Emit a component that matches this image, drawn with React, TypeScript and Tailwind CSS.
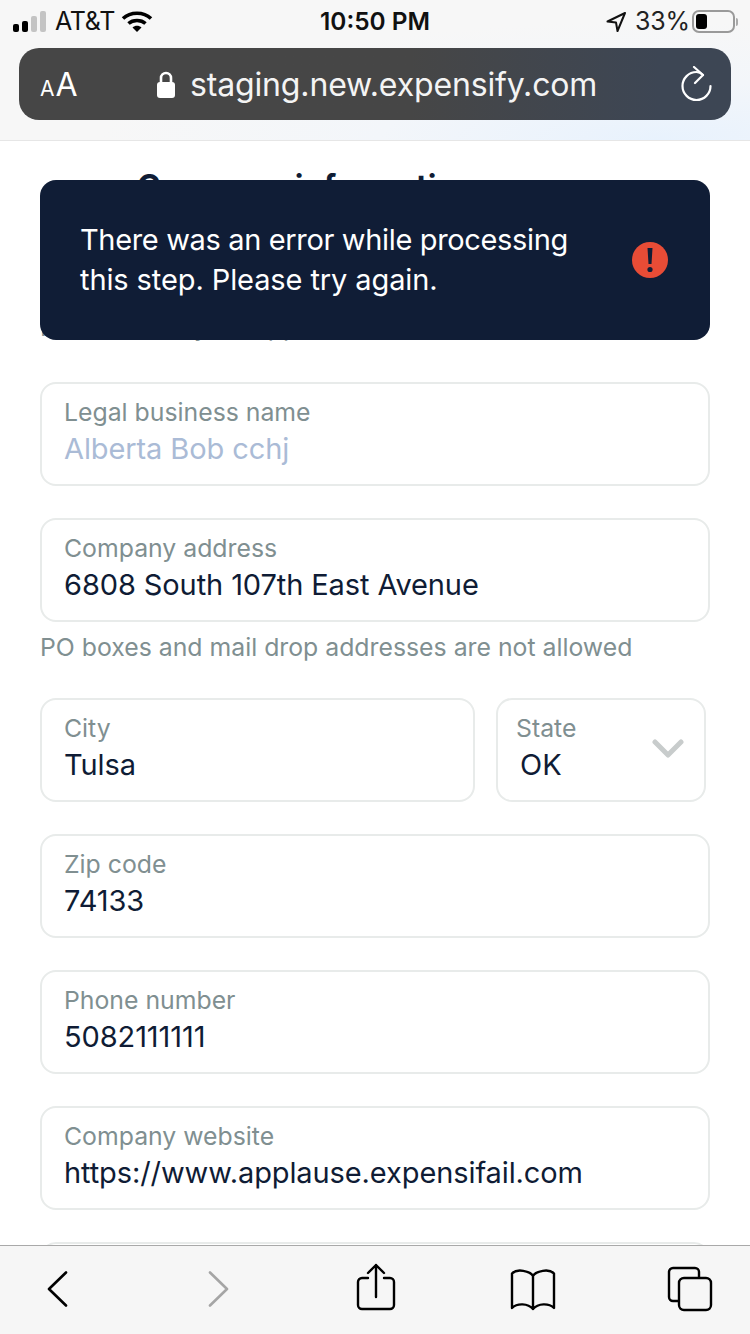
import React from "react";

const font = "font-['Inter',sans-serif]";

function Field({ label, value, muted }: { label: string; value: string; muted?: boolean }) {
  return (
    <div className="h-[104px] rounded-[16px] border-2 border-[#e8ebea] px-[22px] pt-[13px] bg-white">
      <p className="text-[24.8px] leading-[30px] text-[#808f91]">{label}</p>
      <p className={`text-[29px] leading-[36px] mt-[4px] tracking-[-0.1px] whitespace-nowrap ${muted ? "text-[#aabbd6]" : "text-[#0f1c35]"}`}>{value}</p>
    </div>
  );
}

function StatusBar() {
  return (
    <div className="h-[48px] flex items-center pl-[13px] pb-[5px] text-[25px] leading-none text-[#111]">
      <div className="flex items-end gap-[3px] h-[21px] mr-[9px] shrink-0">
        <span className="w-[6px] h-[8px] rounded-[2px] bg-black" />
        <span className="w-[6px] h-[11px] rounded-[2px] bg-black" />
        <span className="w-[6px] h-[16px] rounded-[2px] bg-[#c4c4c4]" />
        <span className="w-[6px] h-[21px] rounded-[2px] bg-[#c4c4c4]" />
      </div>
      <span className="w-[66px] shrink-0 tracking-[-0.3px]">AT&amp;T</span>
      <svg width="32" height="24" viewBox="0 0 32 24" className="shrink-0">
        <path d="M2 8.500C9.500 1.500 22.500 1.500 30 8.500" fill="none" stroke="#000" strokeWidth="3.600" />
        <path d="M7.500 13.500C12 9.500 20 9.500 24.500 13.500" fill="none" stroke="#000" strokeWidth="3.600" />
        <path d="M11.500 17.500C14 15.300 18 15.300 20.500 17.500L16 22Z" fill="#000" />
      </svg>
      <span className="ml-[167px] w-[112px] shrink-0 text-[24.400px] font-semibold whitespace-nowrap">10:50 PM</span>
      <svg width="22" height="22" viewBox="0 0 22 22" className="ml-[173px] shrink-0">
        <path d="M20 2 2.500 10.500 11 11.500 12.500 20Z" fill="none" stroke="#111" strokeWidth="2" strokeLinejoin="round" />
      </svg>
      <span className="ml-[8px] w-[51px] shrink-0 whitespace-nowrap text-[#222] tracking-[-0.2px]">33%</span>
      <div className="ml-[6px] w-[43px] h-[23px] shrink-0 rounded-[7px] border-2 border-[#9a9a9a] p-[2px] flex">
        <span className="w-[11px] rounded-[3px] bg-black" />
      </div>
      <span className="w-[2px] h-[8px] ml-[1px] shrink-0 bg-[#aaa] rounded-r" />
    </div>
  );
}

function UrlBar() {
  return (
    <div className="mx-[19px] h-[72px] rounded-[20px] flex items-center text-white bg-gradient-to-r from-[#464646] from-55% to-[#3d4654] to-90%">
      <div className="ml-[21px] w-[40px] shrink-0 flex items-baseline gap-[1px] leading-none mt-[2px]">
        <span className="text-[21px]">A</span>
        <span className="text-[32px]">A</span>
      </div>
      <svg width="20" height="29" viewBox="0 0 20 29" className="ml-[76px] shrink-0">
        <path d="M5 13V8a5 5 0 0 1 10 0v5" fill="none" stroke="#fff" strokeWidth="2.600" />
        <rect x="1" y="12" width="18" height="16" rx="3" fill="#fff" />
      </svg>
      <span className="ml-[14px] mt-[2px] text-[32px] tracking-[-0.15px] whitespace-nowrap text-[#f4f4f4]">staging.new.expensify.com</span>
      <svg width="32" height="38" viewBox="0 0 32 38" className="ml-auto mr-[18px] mt-[2px] shrink-0" fill="none" stroke="#fff" strokeWidth="2.200" strokeLinecap="round" strokeLinejoin="round">
        <path d="M22 9C20 7 18 6 15.500 6A14 14 0 1 0 29.500 20" />
        <path d="M13 1l9 8-8 8" />
      </svg>
    </div>
  );
}

function BottomBar() {
  return (
    <div className="h-[89px] shrink-0 border-t border-[#a9a9a9] bg-[#f6f6f6] flex items-center pl-[47px] pb-[3px]">
      <svg width="24" height="36" viewBox="0 0 24 36" className="shrink-0" fill="none" stroke="#000" strokeWidth="2.600" strokeLinecap="round" strokeLinejoin="round">
        <path d="M19 1.500 2 18l17 16.500" />
      </svg>
      <svg width="24" height="36" viewBox="0 0 24 36" className="ml-[135px] shrink-0" fill="none" stroke="#a5a5a5" strokeWidth="2.600" strokeLinecap="round" strokeLinejoin="round">
        <path d="M4 1.500 21 18 4 34.500" />
      </svg>
      <svg width="40" height="48" viewBox="0 0 40 48" className="ml-[126px] mt-[-3px] shrink-0" fill="none" stroke="#000" strokeWidth="2.400" strokeLinecap="round" strokeLinejoin="round">
        <path d="M12 15H6a4 4 0 0 0-4 4v23a4 4 0 0 0 4 4h28a4 4 0 0 0 4-4V19a4 4 0 0 0-4-4h-6" />
        <path d="M20 34V2M12 10l8-8 8 8" />
      </svg>
      <svg width="48" height="44" viewBox="0 0 48 44" className="ml-[113px] mt-[2px] shrink-0" fill="none" stroke="#000" strokeWidth="2.400" strokeLinecap="round" strokeLinejoin="round">
        <path d="M24 8C21 3 8 0 3 5.500V40C8 35 19 35 24 41 29 35 40 35 45 40V5.500C40 0 27 3 24 8ZM24 8V41" />
      </svg>
      <svg width="46" height="46" viewBox="0 0 46 46" className="ml-[110px] shrink-0" fill="none" stroke="#000" strokeWidth="2.400" strokeLinejoin="round">
        <path d="M12 35H6a4 4 0 0 1-4-4V6a4 4 0 0 1 4-4h22a4 4 0 0 1 4 4v6" />
        <rect x="12" y="12" width="32" height="32" rx="5" />
      </svg>
    </div>
  );
}

export default function App() {
  return (
    <div className={`${font} w-[750px] h-[1334px] flex flex-col overflow-hidden bg-white`}>
      {/* safari top */}
      <header className="h-[141px] shrink-0 border-b border-[#e6e6e6] bg-[radial-gradient(ellipse_at_88%_100%,#e8f2fd_0%,#f3f6fa_30%,#f7f7f7_60%)]">
        <StatusBar />
        <UrlBar />
      </header>

      {/* page */}
      <main className="relative flex-1 overflow-hidden px-[40px]">
        <h1 className="mt-[26px] pl-[97px] text-[32px] leading-[40px] font-bold text-[#0f1c35] whitespace-nowrap">Company information</h1>
        <p className="mt-[104px] h-[32px] text-[25px] leading-[32px] text-[#808f91] whitespace-nowrap">Please enter your application</p>
        <div className="mt-[39px]">
          <Field label="Legal business name" value="Alberta Bob cchj" muted />
        </div>
        <div className="mt-[32px]">
          <Field label="Company address" value="6808 South 107th East Avenue" />
        </div>
        <p className="mt-[9px] h-[33px] text-[24.8px] leading-[32px] text-[#808f91] whitespace-nowrap">PO boxes and mail drop addresses are not allowed</p>
        <div className="mt-[34px] flex">
          <div className="w-[435px]">
            <Field label="City" value="Tulsa" />
          </div>
          <div className="relative ml-[21px] w-[210px] h-[104px] rounded-[16px] border-2 border-[#e8ebea] pl-[18px] pt-[13px]">
            <p className="text-[24.8px] leading-[30px] text-[#808f91]">State</p>
            <p className="text-[29px] leading-[36px] mt-[4px] ml-[4px] text-[#0f1c35]">OK</p>
            <svg width="32" height="20" viewBox="0 0 32 20" className="absolute right-[20px] top-[39px]" fill="none" stroke="#c8cccc" strokeWidth="5" strokeLinecap="round" strokeLinejoin="round">
              <path d="M3 3l13 13L29 3" />
            </svg>
          </div>
        </div>
        <div className="mt-[32px]">
          <Field label="Zip code" value="74133" />
        </div>
        <div className="mt-[32px]">
          <Field label="Phone number" value="5082111111" />
        </div>
        <div className="mt-[32px]">
          <Field label="Company website" value="https://www.applause.expensifail.com" />
        </div>
        <div className="mt-[32px] h-[104px] rounded-[16px] border-2 border-[#e8ebea]" />

        {/* error toast */}
        <div className="absolute left-[40px] top-[39px] w-[670px] h-[160px] rounded-[16px] bg-[#101d36] flex items-center pl-[40px] pr-[42px]">
          <p className="flex-1 text-[29px] leading-[40px] text-white tracking-[-0.35px]">
            There was an error while processing
            <br />
            <span className="tracking-[-0.1px]">this step. Please try again.</span>
          </p>
          <svg width="36" height="36" viewBox="0 0 36 36">
            <circle cx="18" cy="18" r="18" fill="#e84c36" />
            <path d="M15.500 6h5l-1 16h-3Z" fill="#101d36" />
            <circle cx="18" cy="27.500" r="2.600" fill="#101d36" />
          </svg>
        </div>
      </main>

      <BottomBar />
    </div>
  );
}
